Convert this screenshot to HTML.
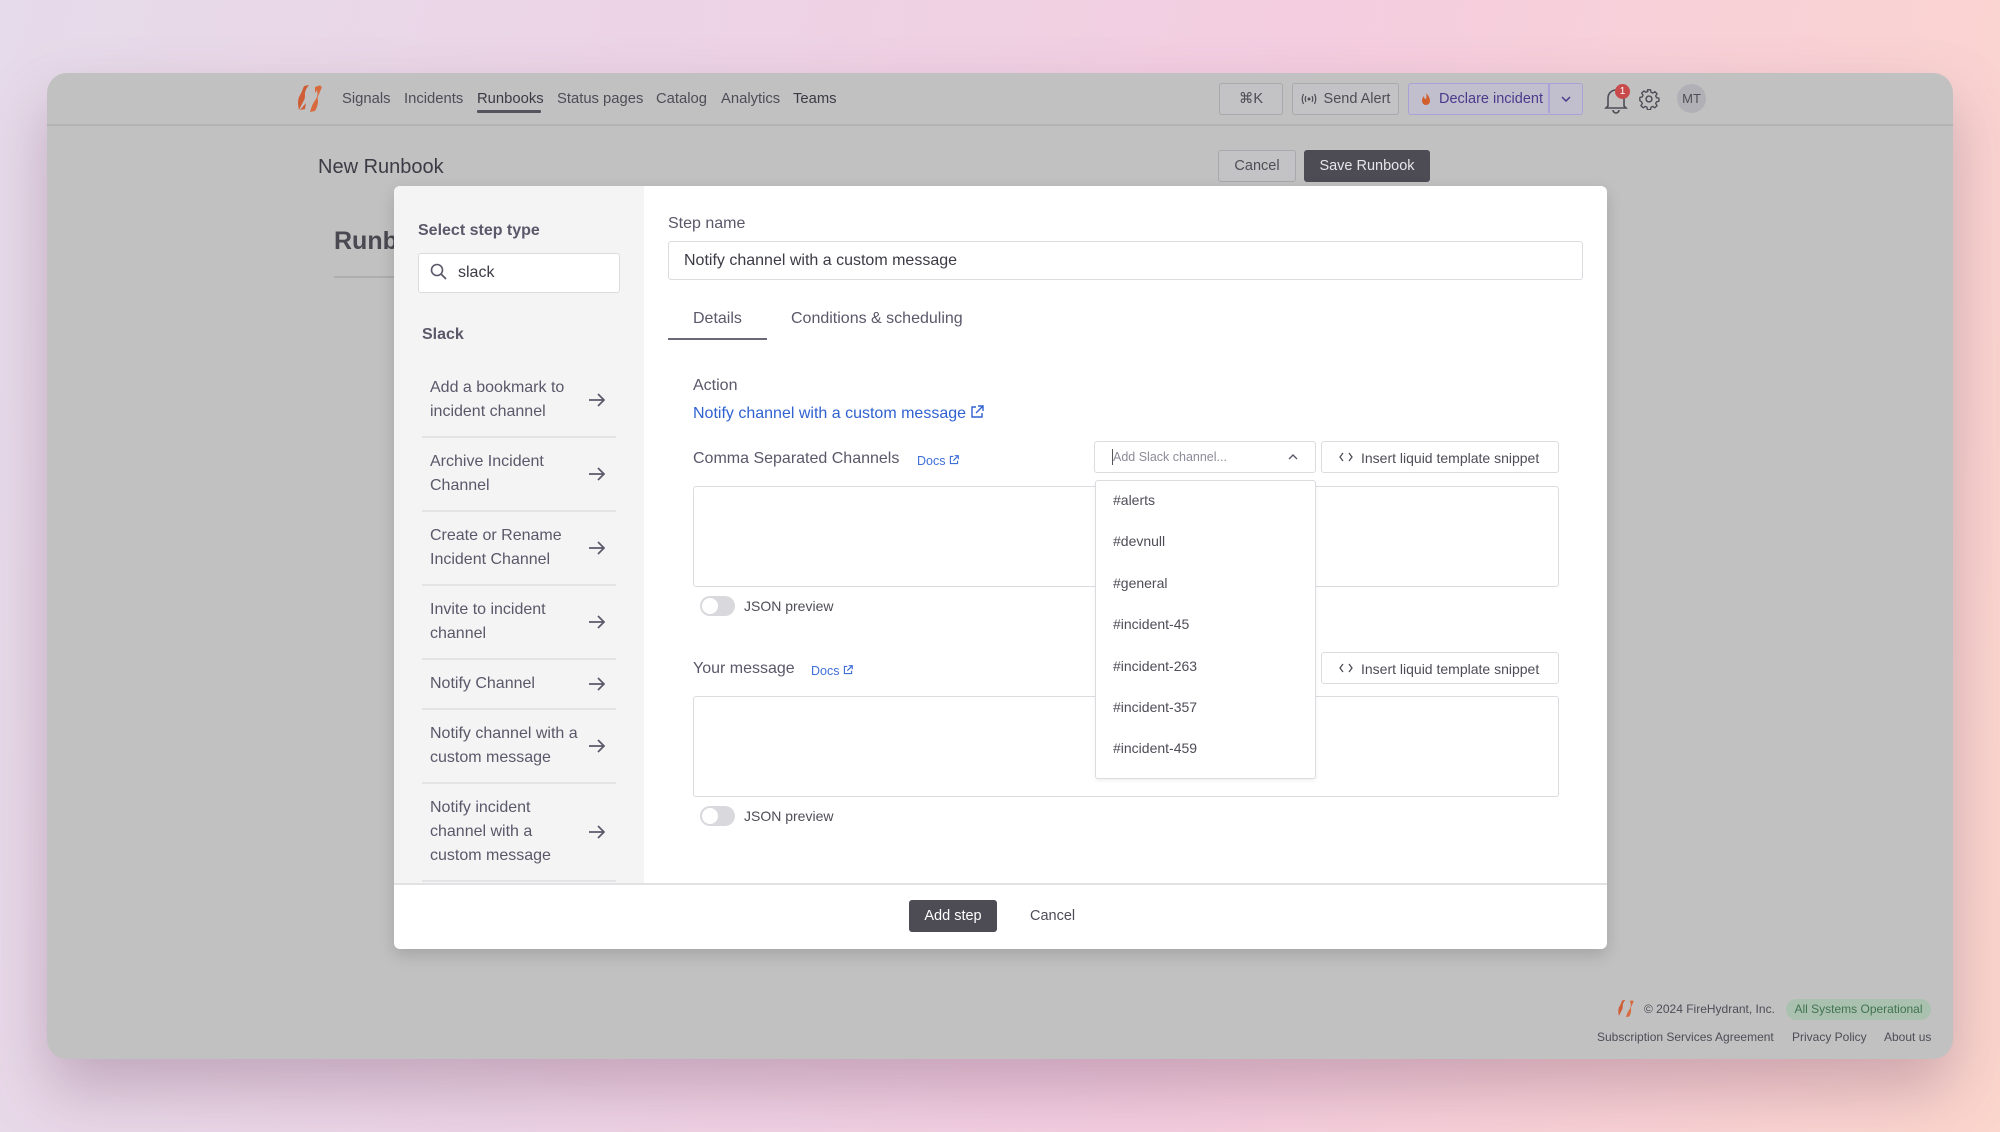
<!DOCTYPE html>
<html><head><meta charset="utf-8">
<style>
*{box-sizing:border-box;margin:0;padding:0}
html,body{width:2000px;height:1132px;overflow:hidden}
body{font-family:"Liberation Sans",Helvetica,Arial,sans-serif;background:linear-gradient(100deg,#e6dbea 0%,#ecd4e6 30%,#f4cde0 60%,#f9d2d4 85%,#fbd6cc 100%);position:relative;color:#4a4857}
.abs{position:absolute}
#win{left:47px;top:73px;width:1906px;height:986px;border-radius:20px;background:#c1c1c1;box-shadow:0 30px 60px rgba(120,80,110,.35);overflow:hidden}
.t{position:absolute;white-space:nowrap;line-height:1}
.nav{font-size:14.8px;color:#4e4d57;top:92px}
.btn{position:absolute;border:1.5px solid #a9a9ad;border-radius:3px;background:#c3c3c5;color:#4e4d57;font-size:14.5px;display:flex;align-items:center;justify-content:center}
#modal{left:394px;top:186px;width:1213px;height:763px;background:#fff;border-radius:6px;box-shadow:0 6px 16px rgba(0,0,0,.15);overflow:hidden}
.m{color:#5a5869}
.item{position:absolute;left:28px;width:194px;border-bottom:2px solid #e4e4e7;font-size:16px;line-height:24px;color:#5a5869;padding-left:8px;display:flex;align-items:center}
.item span{width:150px}
.arr{position:absolute;right:10px;top:50%;transform:translateY(-50%)}
.inp{position:absolute;border:1.5px solid #dcdce0;border-radius:3px;background:#fff}
.dd{font-size:14px;color:#4e4d57;left:17px}
.tog{position:absolute;width:35px;height:20px;border-radius:10px;background:#d9d9dd}
.tog:after{content:"";position:absolute;left:2px;top:2px;width:16px;height:16px;border-radius:50%;background:#fff}
.docs{color:#3f6fd8;font-size:12.5px}
.snip{font-size:14px;color:#4e4d57}
.ft{font-size:12px;color:#4e4d57}
</style></head><body>
<div id="win" class="abs">
  <div class="abs" style="left:0;top:51px;width:1906px;height:2px;background:#b3b3b6"></div>
</div>
<svg class="abs" style="left:296px;top:84px" width="28" height="29" viewBox="0 0 28 29"><path d="M8 2 L13 1 Q8 7 9 12 Q9 15 7 18 L3 26 Q1 18 3 13 Q6 8 8 2Z" fill="#cf5d35"/><path d="M4 26 L10 19 L9 25Z" fill="#cf5d35"/><path d="M20 3 Q23 10 20 15 Q16 20 14 28 L19 27 Q22 22 22 17 Q21 13 23 10 L26 3 Q23 1 20 3Z" fill="#d86a3d"/><path d="M25 1 L19 9 L19 3Z" fill="#d86a3d"/></svg>
<div class="t nav" style="left:342px">Signals</div>
<div class="t nav" style="left:404px">Incidents</div>
<div class="t nav" style="left:477px;color:#3c3b45">Runbooks</div>
<div class="abs" style="left:477px;top:110px;width:64px;height:3px;background:#55545e;border-radius:1px"></div>
<div class="t nav" style="left:557px">Status pages</div>
<div class="t nav" style="left:656px">Catalog</div>
<div class="t nav" style="left:721px">Analytics</div>
<div class="t nav" style="left:793px;color:#3c3b45">Teams</div>

<div class="btn" style="left:1219px;top:83px;width:64px;height:32px">⌘K</div>
<div class="btn" style="left:1292px;top:83px;width:107px;height:32px"><svg width="16" height="12" viewBox="0 0 16 12" style="margin-right:7px"><circle cx="8" cy="6" r="1.5" fill="#4e4d57"/><path d="M5 3 Q3.5 6 5 9 M11 3 Q12.5 6 11 9 M2.5 1 Q0 6 2.5 11 M13.5 1 Q16 6 13.5 11" stroke="#4e4d57" stroke-width="1.2" fill="none"/></svg>Send Alert</div>
<div class="btn" style="left:1408px;top:83px;width:175px;height:32px;border-color:#a9a2d6;background:#c1bfcd;justify-content:flex-start;color:#4b3a8c">
  <svg style="margin:0 8px 0 12px" width="10" height="13" viewBox="0 0 10 13"><path d="M5 0 Q9 4 9 8 A4 4 0 0 1 1 8 Q1 5 3 3 Q3 6 5 6 Q6 3 5 0Z" fill="#d2602e"/></svg>Declare incident
  <div class="abs" style="left:139px;top:0;width:1.5px;height:29px;background:#a9a2d6"></div>
  <svg class="abs" style="left:152px;top:12px" width="10" height="6" viewBox="0 0 10 6"><path d="M1 1 L5 5 L9 1" stroke="#4b3a8c" stroke-width="1.5" fill="none"/></svg>
</div>
<svg class="abs" style="left:1604px;top:86px" width="24" height="28" viewBox="0 0 24 28"><path d="M4 20 L4 12 A8 8 0 0 1 20 12 L20 20 L22 22 L2 22Z M9 24 A3 3 0 0 0 15 24" stroke="#4e4d57" stroke-width="1.6" fill="none"/></svg>
<div class="abs" style="left:1615px;top:84px;width:15px;height:15px;border-radius:50%;background:#c94a4a;color:#fff;font-size:10px;text-align:center;line-height:15px">1</div>
<svg class="abs" style="left:1638px;top:88px" width="22" height="22" viewBox="0 0 24 24"><circle cx="12" cy="12" r="3.2" stroke="#4e4d57" stroke-width="1.6" fill="none"/><path d="M10.3 2h3.4l.5 2.6 2 .9 2.2-1.5 2.4 2.4-1.5 2.2.9 2 2.6.5v3.4l-2.6.5-.9 2 1.5 2.2-2.4 2.4-2.2-1.5-2 .9-.5 2.6h-3.4l-.5-2.6-2-.9-2.2 1.5-2.4-2.4 1.5-2.2-.9-2L2 13.7v-3.4l2.6-.5.9-2L4 5.6 6.4 3.2l2.2 1.5 2-.9z" stroke="#4e4d57" stroke-width="1.5" fill="none" stroke-linejoin="round"/></svg>
<div class="abs" style="left:1677px;top:84px;width:29px;height:29px;border-radius:50%;background:#b1b0b6;color:#4e4d57;font-size:13px;text-align:center;line-height:29px">MT</div>

<div class="t" style="left:318px;top:157px;font-size:20px;color:#3c3b45">New Runbook</div>
<div class="btn" style="left:1218px;top:150px;width:78px;height:32px">Cancel</div>
<div class="btn" style="left:1304px;top:150px;width:126px;height:32px;background:#4d4c55;border-color:#4d4c55;color:#e6e6ea">Save Runbook</div>
<div class="t" style="left:334px;top:229px;font-size:25px;font-weight:bold;color:#4a4952">Runb</div>
<div class="abs" style="left:334px;top:276px;width:70px;height:2px;background:#aeaeb1"></div>

<div id="modal" class="abs">
  <div class="abs" style="left:0;top:0;width:250px;height:698px;background:#f4f4f5"></div>
  <div class="t m" style="left:24px;top:37px;font-size:16px;font-weight:bold">Select step type</div>
  <div class="inp" style="left:24px;top:67px;width:202px;height:40px"></div>
  <svg class="abs" style="left:35px;top:76px" width="20" height="20" viewBox="0 0 20 20"><circle cx="8" cy="8" r="5.5" stroke="#5a5869" stroke-width="1.6" fill="none"/><path d="M12 12 L17 17" stroke="#5a5869" stroke-width="1.8"/></svg>
  <div class="t m" style="left:64px;top:79px;font-size:16px;color:#3c3b45">slack</div>
  <div class="t m" style="left:28px;top:141px;font-size:16px;font-weight:bold">Slack</div>

  <div class="item" style="top:178px;height:74px"><span>Add a bookmark to incident channel</span><svg class="arr" width="18" height="16" viewBox="0 0 18 16"><path d="M1 8H16M10 2L16 8L10 14" stroke="#5a5869" stroke-width="1.7" fill="none"/></svg></div>
  <div class="item" style="top:252px;height:74px"><span>Archive Incident Channel</span><svg class="arr" width="18" height="16" viewBox="0 0 18 16"><path d="M1 8H16M10 2L16 8L10 14" stroke="#5a5869" stroke-width="1.7" fill="none"/></svg></div>
  <div class="item" style="top:326px;height:74px"><span>Create or Rename Incident Channel</span><svg class="arr" width="18" height="16" viewBox="0 0 18 16"><path d="M1 8H16M10 2L16 8L10 14" stroke="#5a5869" stroke-width="1.7" fill="none"/></svg></div>
  <div class="item" style="top:400px;height:74px"><span>Invite to incident channel</span><svg class="arr" width="18" height="16" viewBox="0 0 18 16"><path d="M1 8H16M10 2L16 8L10 14" stroke="#5a5869" stroke-width="1.7" fill="none"/></svg></div>
  <div class="item" style="top:474px;height:50px"><span>Notify Channel</span><svg class="arr" width="18" height="16" viewBox="0 0 18 16"><path d="M1 8H16M10 2L16 8L10 14" stroke="#5a5869" stroke-width="1.7" fill="none"/></svg></div>
  <div class="item" style="top:524px;height:74px"><span>Notify channel with a custom message</span><svg class="arr" width="18" height="16" viewBox="0 0 18 16"><path d="M1 8H16M10 2L16 8L10 14" stroke="#5a5869" stroke-width="1.7" fill="none"/></svg></div>
  <div class="item" style="top:598px;height:98px"><span>Notify incident channel with a custom message</span><svg class="arr" width="18" height="16" viewBox="0 0 18 16"><path d="M1 8H16M10 2L16 8L10 14" stroke="#5a5869" stroke-width="1.7" fill="none"/></svg></div>

  <div class="t m" style="left:274px;top:30px;font-size:16px">Step name</div>
  <div class="inp" style="left:274px;top:55px;width:915px;height:39px"></div>
  <div class="t" style="left:290px;top:67px;font-size:16px;color:#3c3b45">Notify channel with a custom message</div>
  <div class="t m" style="left:299px;top:125px;font-size:16px">Details</div>
  <div class="t m" style="left:397px;top:125px;font-size:16px">Conditions &amp; scheduling</div>
  <div class="abs" style="left:274px;top:152px;width:99px;height:2px;background:#6b6978"></div>

  <div class="t m" style="left:299px;top:192px;font-size:16px">Action</div>
  <div class="t" style="left:299px;top:219px;font-size:16px;color:#2f62d0">Notify channel with a custom message <svg width="14" height="14" viewBox="0 0 14 14" style="vertical-align:-1px"><path d="M6 2H2V12H12V8M8 1H13V6M13 1L6 8" stroke="#2f62d0" stroke-width="1.4" fill="none"/></svg></div>

  <div class="t m" style="left:299px;top:265px;font-size:16px">Comma Separated Channels</div>
  <div class="t docs" style="left:523px;top:269px">Docs <svg width="10" height="10" viewBox="0 0 14 14"><path d="M6 2H2V12H12V8M8 1H13V6M13 1L6 8" stroke="#3f6fd8" stroke-width="1.6" fill="none"/></svg></div>
  <div class="inp" style="left:700px;top:255px;width:222px;height:32px"></div>
  <div class="abs" style="left:718px;top:263px;width:1px;height:16px;background:#555"></div>
  <div class="t" style="left:719px;top:265px;font-size:12.5px;color:#8d8b98">Add Slack channel...</div>
  <svg class="abs" style="left:894px;top:268px" width="10" height="6" viewBox="0 0 10 6"><path d="M1 5L5 1L9 5" stroke="#5a5869" stroke-width="1.4" fill="none"/></svg>
  <div class="inp" style="left:927px;top:255px;width:238px;height:32px"></div>
  <svg class="abs" style="left:945px;top:266px" width="14" height="10" viewBox="0 0 14 10"><path d="M4 1L1 5L4 9M10 1L13 5L10 9" stroke="#4e4d57" stroke-width="1.3" fill="none"/></svg>
  <div class="t snip" style="left:967px;top:265px">Insert liquid template snippet</div>
  <div class="inp" style="left:299px;top:300px;width:866px;height:101px"></div>
  <div class="tog" style="left:306px;top:410px"></div>
  <div class="t m" style="left:350px;top:413px;font-size:14px;color:#4e4d57">JSON preview</div>

  <div class="t m" style="left:299px;top:475px;font-size:16px">Your message</div>
  <div class="t docs" style="left:417px;top:479px">Docs <svg width="10" height="10" viewBox="0 0 14 14"><path d="M6 2H2V12H12V8M8 1H13V6M13 1L6 8" stroke="#3f6fd8" stroke-width="1.6" fill="none"/></svg></div>
  <div class="inp" style="left:927px;top:466px;width:238px;height:32px"></div>
  <svg class="abs" style="left:945px;top:477px" width="14" height="10" viewBox="0 0 14 10"><path d="M4 1L1 5L4 9M10 1L13 5L10 9" stroke="#4e4d57" stroke-width="1.3" fill="none"/></svg>
  <div class="t snip" style="left:967px;top:476px">Insert liquid template snippet</div>
  <div class="inp" style="left:299px;top:510px;width:866px;height:101px"></div>
  <div class="tog" style="left:306px;top:620px"></div>
  <div class="t m" style="left:350px;top:623px;font-size:14px;color:#4e4d57">JSON preview</div>

  <div class="abs" style="left:701px;top:294px;width:221px;height:299px;background:#fff;border:1.5px solid #dcdce0;border-radius:3px;box-shadow:0 2px 4px rgba(0,0,0,.06)">
    <div class="t dd" style="top:12px">#alerts</div>
    <div class="t dd" style="top:53px">#devnull</div>
    <div class="t dd" style="top:95px">#general</div>
    <div class="t dd" style="top:136px">#incident-45</div>
    <div class="t dd" style="top:178px">#incident-263</div>
    <div class="t dd" style="top:219px">#incident-357</div>
    <div class="t dd" style="top:260px">#incident-459</div>
  </div>

  <div class="abs" style="left:0;top:697px;width:1213px;height:2px;background:#e2e2e5"></div>
  <div class="abs" style="left:515px;top:714px;width:88px;height:32px;background:#4d4c55;border-radius:3px;color:#fff;font-size:14.5px;text-align:center;line-height:32px">Add step</div>
  <div class="t m" style="left:636px;top:723px;font-size:14.5px;color:#4e4d57">Cancel</div>
</div>

<svg class="abs" style="left:1617px;top:999px" width="18" height="19" viewBox="0 0 28 29"><path d="M8 2 L13 1 Q8 7 9 12 Q9 15 7 18 L3 26 Q1 18 3 13 Q6 8 8 2Z" fill="#cf5d35"/><path d="M20 3 Q23 10 20 15 Q16 20 14 28 L19 27 Q22 22 22 17 Q21 13 23 10 L26 3 Q23 1 20 3Z" fill="#d86a3d"/></svg>
<div class="t ft" style="left:1644px;top:1003px">© 2024 FireHydrant, Inc.</div>
<div class="abs" style="left:1786px;top:999px;width:145px;height:21px;border-radius:11px;background:#abc1b0;color:#3f7350;font-size:12px;text-align:center;line-height:21px">All Systems Operational</div>
<div class="t ft" style="left:1597px;top:1031px">Subscription Services Agreement</div>
<div class="t ft" style="left:1792px;top:1031px">Privacy Policy</div>
<div class="t ft" style="left:1884px;top:1031px">About us</div>
</body></html>
